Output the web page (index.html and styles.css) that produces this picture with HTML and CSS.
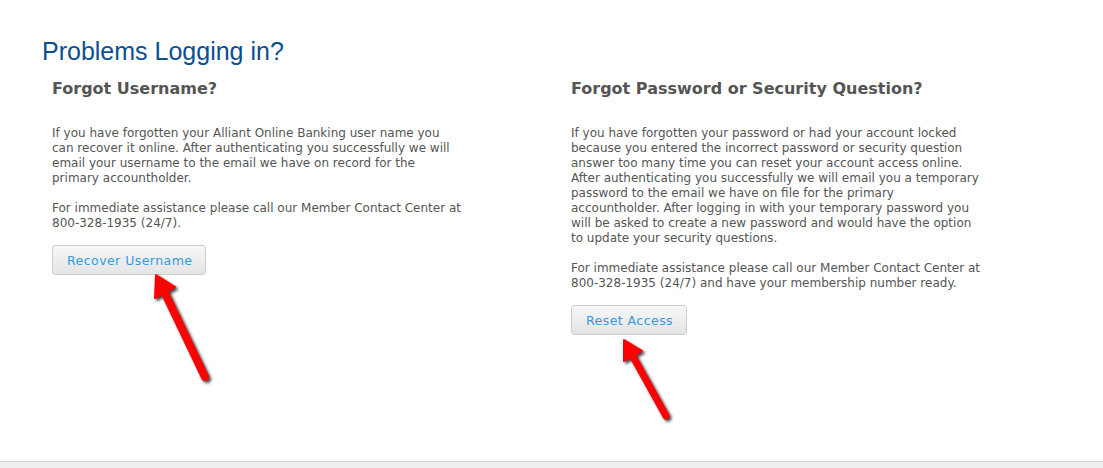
FILE: index.html
```html
<!DOCTYPE html>
<html lang="en">
<head>
<meta charset="utf-8">
<title>Problems Logging in?</title>
<link rel="stylesheet" href="styles.css">
</head>
<body>
<div class="page">
  <main class="main">
    <h1 class="title">Problems Logging in?</h1>
    <div class="columns">
      <section class="col">
        <h2 class="col-title">Forgot Username?</h2>
        <p class="text">If you have forgotten your Alliant Online Banking user name you can recover it online. After authenticating you successfully we will email your username to the email we have on record for the primary accountholder.</p>
        <p class="text">For immediate assistance please call our Member Contact Center at 800-328-1935 (24/7).</p>
        <button class="btn" type="button">Recover Username</button>
      </section>
      <section class="col">
        <h2 class="col-title">Forgot Password or Security Question?</h2>
        <p class="text">If you have forgotten your password or had your account locked because you entered the incorrect password or security question answer too many time you can reset your account access online. After authenticating you successfully we will email you a temporary password to the email we have on file for the primary accountholder. After logging in with your temporary password you will be asked to create a new password and would have the option to update your security questions.</p>
        <p class="text">For immediate assistance please call our Member Contact Center at 800-328-1935 (24/7) and have your membership number ready.</p>
        <button class="btn" type="button">Reset Access</button>
      </section>
    </div>
  </main>
  <footer class="footer"></footer>
  <svg class="arrows" width="1103" height="468" viewBox="0 0 1103 468" aria-hidden="true">
    <g class="arrow">
      <line x1="205" y1="377" x2="163" y2="289" stroke="#ff0000" stroke-width="8" stroke-linecap="round"/>
      <polygon points="156,275 175,287 155,298" fill="#ff0000" stroke="#ff0000" stroke-width="2" stroke-linejoin="round"/>
    </g>
    <g class="arrow">
      <line x1="666" y1="416" x2="631" y2="353" stroke="#ff0000" stroke-width="7" stroke-linecap="round"/>
      <polygon points="624,340 642,351 624,361" fill="#ff0000" stroke="#ff0000" stroke-width="2" stroke-linejoin="round"/>
    </g>
  </svg>
</div>
</body>
</html>
```

FILE: styles.css
```css
html, body {
  margin: 0;
  padding: 0;
  background: #ffffff;
}

.page {
  position: relative;
  width: 1103px;
  height: 468px;
  overflow: hidden;
  display: flex;
  flex-direction: column;
}

.main {
  height: 423px;
  padding: 38px 0 0 42px;
}

.title {
  margin: 0;
  font-family: "Liberation Sans", Arial, sans-serif;
  font-weight: normal;
  font-size: 25px;
  line-height: 27px;
  color: #0b4f92;
}

.columns {
  display: grid;
  grid-template-columns: 519px 519px;
  margin-top: 14px;
}

.col {
  padding-left: 10px;
}

.col-title {
  margin: 0 0 27px 0;
  font-family: "DejaVu Sans", Verdana, sans-serif;
  font-weight: bold;
  font-size: 16px;
  line-height: 20px;
  color: #555555;
}

.text {
  width: 410px;
  margin: 0 0 15px 0;
  font-family: "DejaVu Sans", Verdana, sans-serif;
  font-size: 12px;
  line-height: 15px;
  color: #555555;
}

.text:last-of-type {
  margin-bottom: 14px;
}

.btn {
  display: block;
  height: 30px;
  padding: 0 13px 0 14px;
  border: 1px solid #cfcfcf;
  border-radius: 3px;
  background: linear-gradient(#f7f7f7, #e4e4e4);
  font-family: "DejaVu Sans", Verdana, sans-serif;
  font-size: 12.5px;
  letter-spacing: 0.45px;
  color: #2f9be0;
  cursor: pointer;
}

.footer {
  flex: 1;
  border-top: 1px solid #d2d2d2;
  background: #eef0ee;
}

.arrows {
  position: absolute;
  left: 0;
  top: 0;
  pointer-events: none;
}

.arrow {
  filter: drop-shadow(2px 2px 1.5px rgba(0, 0, 0, 0.75));
}
```
